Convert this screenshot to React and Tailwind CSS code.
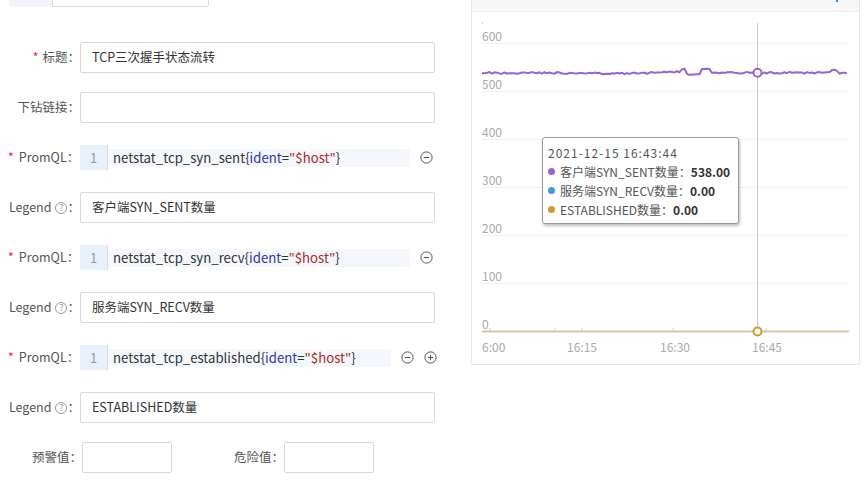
import React from 'react';

const FONT = "font-['Noto_Sans_CJK_SC','Noto_Sans',sans-serif]";

function MinusIcon() {
  return (
    <svg width="13" height="13" viewBox="0 0 13 13" className="shrink-0">
      <circle cx="6.5" cy="6.5" r="5.6" fill="none" stroke="#555" strokeWidth="1" />
      <line x1="3.8" y1="6.5" x2="9.2" y2="6.5" stroke="#555" strokeWidth="1.1" />
    </svg>
  );
}

function PlusIcon() {
  return (
    <svg width="13" height="13" viewBox="0 0 13 13" className="shrink-0">
      <circle cx="6.5" cy="6.5" r="5.6" fill="none" stroke="#555" strokeWidth="1" />
      <line x1="3.8" y1="6.5" x2="9.2" y2="6.5" stroke="#555" strokeWidth="1.1" />
      <line x1="6.5" y1="3.8" x2="6.5" y2="9.2" stroke="#555" strokeWidth="1.1" />
    </svg>
  );
}

function HelpIcon() {
  return (
    <span className="ml-[4px] inline-flex h-[12px] w-[12px] items-center justify-center rounded-full border border-[#999] text-[9px] leading-none text-[#999]">
      ?
    </span>
  );
}

function Label({ required, children, help }) {
  return (
    <div className="flex w-[80px] shrink-0 items-center justify-end text-[12.5px] text-[#555]">
      {required && <span className="mr-[4px] text-[#f5222d]">*</span>}
      <span>{children}</span>
      {help && <HelpIcon />}
      <span>：</span>
    </div>
  );
}

function TextRow({ label, required, help, value }) {
  return (
    <div className="flex h-[31px] items-center">
      <Label required={required} help={help}>{label}</Label>
      <div className="flex h-[31px] w-[355px] items-center rounded-[2px] border border-[#d9d9d9] bg-white px-[11px] text-[12.5px] text-[#333]">
        {value}
      </div>
    </div>
  );
}

function PromRow({ metric, codeWidth, last }) {
  return (
    <div className="flex h-[31px] items-center">
      <div className="flex w-[80px] shrink-0 items-center pl-[8px] text-[12.5px] text-[#555]">
        <span className="mr-[5px] text-[#f5222d]">*</span>
        <span>PromQL</span>
        <span>：</span>
      </div>
      <div className="flex h-[25px] w-[28px] shrink-0 items-center justify-center border-r border-[#ddd] bg-[#e8f1fb] text-[13px] text-[#999]">
        1
      </div>
      <div
        className={`flex h-[18px] items-center bg-[#f4f8fd] pl-[5px] text-[13.2px] text-[#333] ${codeWidth}`}
      >
        <span>{metric}</span>
        <span>{'{'}</span>
        <span className="text-[#3232b4]">ident</span>
        <span>=</span>
        <span className="text-[#b3261e]">"$host"</span>
        <span>{'}'}</span>
      </div>
      {last ? (
        <div className="ml-[10px] flex items-center gap-[10px]">
          <MinusIcon />
          <PlusIcon />
        </div>
      ) : (
        <div className="ml-[10px]">
          <MinusIcon />
        </div>
      )}
    </div>
  );
}

function hash(i) {
  const v = Math.sin(i * 127.1 + 11.7) * 43758.5453;
  return v - Math.floor(v);
}

function purplePath() {
  const pts = [];
  let i = 0;
  for (let x = 482; x <= 849; x += 2.5) {
    let y = 72.8;
    if (x > 560 && x < 650) y = 73.4;
    if (x >= 650 && x < 681) y = 73 - ((x - 650) / 31) * 1.6;
    if (x >= 681 && x < 687) y = 69.5;
    if (x >= 687 && x < 701) y = 74.3;
    if (x >= 701 && x < 710) y = 68.6;
    if (x >= 710 && x < 722) y = 72.3;
    if (x >= 831 && x < 838) y = 70.6;
    if (x >= 838) y = 73.4;
    y += (hash(i) - 0.5) * 1.8;
    pts.push(`${x.toFixed(1)},${y.toFixed(1)}`);
    i++;
  }
  return 'M' + pts.join(' L');
}

function Chart() {
  const grid = [
    { v: '600', y: 43 },
    { v: '500', y: 91 },
    { v: '400', y: 139 },
    { v: '300', y: 187 },
    { v: '200', y: 235 },
    { v: '100', y: 283 },
    { v: '0', y: 331 },
  ];
  const xt = [
    { t: '6:00', x: 482 },
    { t: '16:15', x: 567 },
    { t: '16:30', x: 660 },
    { t: '16:45', x: 752 },
  ];
  return (
    <svg width="387" height="352" viewBox="472 12 387 352" className="block">
      <rect x="482" y="22.5" width="1" height="1" fill="#9ab" />
      {grid.map(g => (
        <g key={g.v}>
          <line x1="482" y1={g.y + 0.5} x2="849" y2={g.y + 0.5} stroke="#f0f0f0" strokeWidth="1" />
          <text x="482" y={g.y - 2.5} fontSize="12" fill="#aaa" fontFamily="Noto Sans CJK SC, sans-serif">
            {g.v}
          </text>
        </g>
      ))}
      <line x1="757.5" y1="23" x2="757.5" y2="332" stroke="#c8c8c8" strokeWidth="1" />
      {[490, 555, 582, 673, 766].map(x => (
        <line key={x} x1={x} y1="328" x2={x} y2="331" stroke="#bcd6e6" strokeWidth="1" />
      ))}
      <line x1="482" y1="331.5" x2="849" y2="331.5" stroke="#d8c5a2" strokeWidth="2" />
      <path d={purplePath()} fill="none" stroke="#9a62d6" strokeWidth="2" strokeLinejoin="round" />
      <circle cx="757.5" cy="72.8" r="4" fill="#fff" stroke="#9a62d6" strokeWidth="2" />
      <circle cx="757.5" cy="331.5" r="4" fill="#fff" stroke="#d09a2c" strokeWidth="2" />
      {xt.map(t => (
        <text key={t.t} x={t.x} y="352" fontSize="12" fill="#aaa" fontFamily="Noto Sans CJK SC, sans-serif">
          {t.t}
        </text>
      ))}
    </svg>
  );
}

function Tooltip() {
  const rows = [
    { c: 'bg-[#9a62d6]', name: '客户端SYN_SENT数量', val: '538.00' },
    { c: 'bg-[#3a9bd8]', name: '服务端SYN_RECV数量', val: '0.00' },
    { c: 'bg-[#d09a2c]', name: 'ESTABLISHED数量', val: '0.00' },
  ];
  return (
    <div className="absolute left-[70px] top-[125px] h-[87px] w-[197px] rounded-[3px] border border-[#999] bg-white px-[5px] pt-[5px] text-[12px] leading-[19px] text-[#555] shadow-[1px_2px_3px_rgba(0,0,0,0.25)]">
      <div className="tracking-[1px]">2021-12-15 16:43:44</div>
      {rows.map(r => (
        <div key={r.name} className="flex items-center">
          <span className={`mr-[5px] h-[7px] w-[7px] rounded-full ${r.c}`} />
          <span>{r.name}：</span>
          <span className="font-bold text-[#333]">{r.val}</span>
        </div>
      ))}
    </div>
  );
}

export default function App() {
  return (
    <div className={`flex h-[498px] w-[867px] overflow-hidden bg-white ${FONT}`}>
      <div className="w-[440px] shrink-0">
        <div className="ml-[9px] mt-[-24px] flex h-[31px]">
          <div className="w-[43px] rounded-bl-[4px] bg-[#f3f4f9]" />
          <div className="w-[157px] rounded-br-[3px] border border-[#d9d9d9] bg-white" />
        </div>
        <div className="mt-[35px] flex flex-col gap-[19px]">
          <TextRow label="标题" required value="TCP三次握手状态流转" />
          <TextRow label="下钻链接" value="" />
          <PromRow metric="netstat_tcp_syn_sent" codeWidth="w-[302px]" />
          <TextRow label="Legend" help value="客户端SYN_SENT数量" />
          <PromRow metric="netstat_tcp_syn_recv" codeWidth="w-[302px]" />
          <TextRow label="Legend" help value="服务端SYN_RECV数量" />
          <PromRow metric="netstat_tcp_established" codeWidth="w-[283px]" last />
          <TextRow label="Legend" help value="ESTABLISHED数量" />
          <div className="flex h-[31px] items-center">
            <div className="w-[82px] shrink-0 text-right text-[12.5px] text-[#555]">预警值：</div>
            <div className="h-[31px] w-[90px] rounded-[2px] border border-[#d9d9d9]" />
            <div className="w-[112px] shrink-0 text-right text-[12.5px] text-[#555]">危险值：</div>
            <div className="h-[31px] w-[90px] rounded-[2px] border border-[#d9d9d9]" />
          </div>
        </div>
      </div>
      <div className="ml-[31px] h-[365px] w-[389px] shrink-0 border-x border-b border-[#e8e8e8]">
        <div className="relative h-[12px] border-b border-[#ececec] bg-[#f7f7f7]">
          <div className="absolute right-[21px] top-0 h-[2px] w-[2px] bg-[#1890ff]" />
        </div>
        <div className="relative">
          <Chart />
          <Tooltip />
        </div>
      </div>
    </div>
  );
}
